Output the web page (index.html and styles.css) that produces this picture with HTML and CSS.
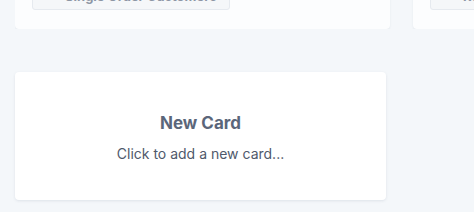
FILE: index.html
```html
<!DOCTYPE html>
<html lang="en">
<head>
    <meta charset="UTF-8">
    <meta name="viewport" content="width=device-width, initial-scale=1.0">
    <title>Board</title>
    <link rel="stylesheet" href="styles.css">
</head>
<body>
    <div class="board">
        <div class="top-row">
            <div class="card card-wide">
                <div class="tag">
                    <svg class="tag-icon" width="11" height="9" viewBox="0 0 11 9"><path d="M0 1h11M0 4.5h11M0 8h11" stroke="#9aa3b2" stroke-width="1.6"/></svg>
                    <span>Single Order Customers</span>
                </div>
            </div>
            <div class="card card-next">
                <div class="tag">
                    <svg class="tag-icon" width="11" height="9" viewBox="0 0 11 9"><path d="M0 1h11M0 4.5h11M0 8h11" stroke="#9aa3b2" stroke-width="1.6"/></svg>
                    <span>Repeat Customers</span>
                </div>
            </div>
        </div>

        <div class="new-card">
            <div class="new-card-title">New Card</div>
            <div class="new-card-text">Click to add a new card...</div>
        </div>
    </div>
</body>
</html>
```

FILE: styles.css
```css
/* General */
body {
    margin: 0;
    padding: 0;
    background-color: #f4f7fa;
    font-family: Inter, "Noto Sans", sans-serif;
}

.board {
    padding: 0 0 0 15px;
    overflow: hidden;
    height: 212px;
}

.top-row {
    display: flex;
    gap: 23px;
    height: 29px;
    align-items: flex-end;
    overflow: hidden;
}

.card {
    background-color: #fcfdfe;
    border-radius: 0 0 4px 4px;
    box-shadow: 0px 1px 2px rgba(30, 50, 80, 0.08);
    padding: 0 17px 19px;
    flex-shrink: 0;
}

.card-wide {
    width: 341px;
}

.card-next {
    width: 200px;
}

.tag {
    display: inline-flex;
    align-items: center;
    gap: 8px;
    height: 26px;
    padding: 0 12px 3px 13px;
    box-sizing: border-box;
    background-color: #f5f7f9;
    border: 1px solid #e6eaef;
    border-radius: 3px;
    color: #8d96a5;
    font-size: 13px;
    font-weight: 700;
}

.new-card {
    margin-top: 43px;
    width: 371px;
    height: 128px;
    background-color: white;
    border-radius: 4px;
    box-shadow: 0px 1px 3px rgba(30, 50, 80, 0.1);
    display: flex;
    flex-direction: column;
    align-items: center;
    justify-content: center;
    padding-top: 3px;
    box-sizing: border-box;
}

.new-card-title {
    font-size: 17px;
    font-weight: 700;
    color: #5b667a;
    line-height: 24px;
}

.new-card-text {
    margin-top: 9px;
    font-size: 14px;
    color: #4f596b;
    line-height: 20px;
}
```
